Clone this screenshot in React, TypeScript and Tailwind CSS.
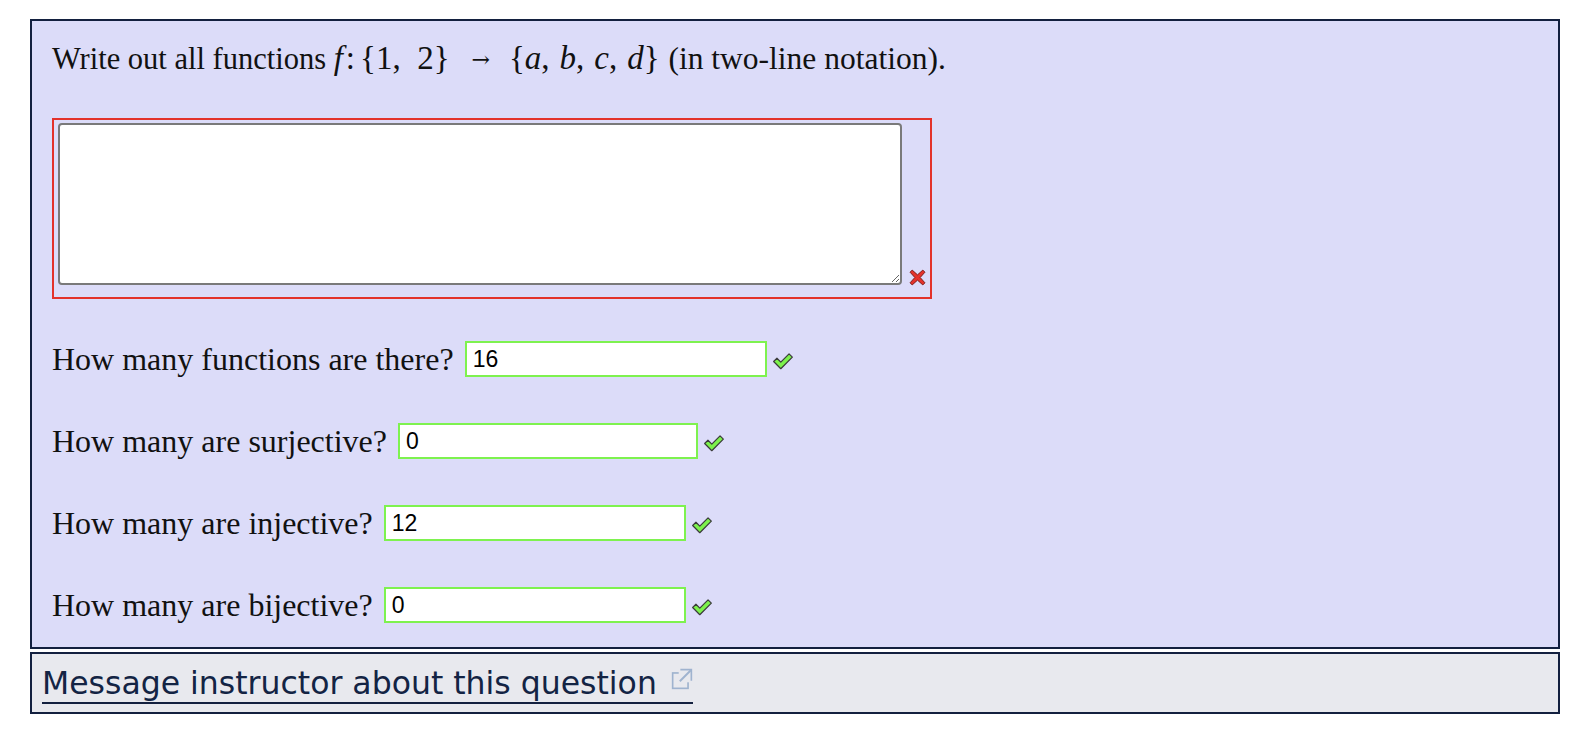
import React from "react";

function CheckIcon() {
  return (
    <svg width="22" height="18" viewBox="0 0 20 16" className="shrink-0">
      <path
        d="M1.5 8.5 L4.5 5.5 L8 9 L15.5 1.5 L18.5 4.5 L8 15 Z"
        fill="#7cf24c"
        stroke="#3b3b3b"
        strokeWidth={1.1}
        strokeLinejoin="round"
      />
    </svg>
  );
}

function CrossIcon() {
  return (
    <svg width="17" height="17" viewBox="0 0 16 16" className="shrink-0">
      <polygon
        points="3,1 8,5.5 13,1 15,3 10.5,8 15,13 13,15 8,10.5 3,15 1,13 5.5,8 1,3"
        fill="#e5322b"
        stroke="#7a1d18"
        strokeWidth={0.9}
        strokeLinejoin="round"
      />
    </svg>
  );
}

function ExternalIcon() {
  return (
    <svg width="22" height="22" viewBox="0 0 20 20" className="shrink-0 self-start mt-[4px]">
      <rect x="1.5" y="4.5" width="14" height="14" fill="none" stroke="#9fb3cf" strokeWidth={1.5} />
      <rect x="7" y="1" width="12" height="12" fill="#e8e9ee" />
      <path d="M8.5 1.5 H18.5 V11.5" fill="none" stroke="#9fb3cf" strokeWidth={1.5} />
      <path d="M18 2 L8 12" stroke="#9fb3cf" strokeWidth={1.8} />
    </svg>
  );
}

const rows = [
  { label: "How many functions are there?", value: "16", width: "w-[302px]" },
  { label: "How many are surjective?", value: "0", width: "w-[300px]" },
  { label: "How many are injective?", value: "12", width: "w-[302px]" },
  { label: "How many are bijective?", value: "0", width: "w-[302px]" },
];

export default function App() {
  const serif = "font-['Liberation_Serif',serif]";
  return (
    <div className="min-h-[750px] bg-white pt-[19px] pl-[30px]">
      <div className="w-[1530px] border-2 border-[#13203f] bg-[#dcdcf9] pl-[20px] pt-[19px] pb-[24px]">
        <p className={`${serif} text-[30.5px] leading-[37px] text-[#111] whitespace-nowrap`}>
          Write out all functions{" "}
          <span className="text-[33px]">
            <i className="mr-[3px]">f</i>:<span className="ml-[5px]">{"{"}1,&nbsp;&nbsp;2{"}"}</span>
            <span className="ml-[22px] mr-[19px] font-['DejaVu_Serif',serif] text-[22px] align-[2px]">→</span>
            <span>
              {"{"}
              <i>a</i>,<i className="ml-[10px]">b</i>,<i className="ml-[10px]">c</i>,
              <i className="ml-[10px]">d</i>
              {"}"}
            </span>
          </span>
          <span className="ml-[9px] text-[31.5px]">(in two-line notation).</span>
        </p>

        <div className="mt-[40px] flex w-[880px] items-end border-2 border-[#e3322b] pt-[3px] pl-[4px] pb-[12px]">
          <textarea
            className="h-[162px] w-[844px] resize-y rounded-[4px] border-2 border-[#7a7a7a] bg-white"
            defaultValue=""
          />
          <div className="ml-[7px] mb-[-1px]">
            <CrossIcon />
          </div>
        </div>

        <div className="mt-[42px] flex flex-col gap-[46px]">
          {rows.map((row) => (
            <div key={row.label} className="flex h-[36px] items-center">
              <span className={`${serif} text-[32px] leading-[37px] text-[#111] whitespace-nowrap`}>
                {row.label}
              </span>
              <input
                readOnly
                value={row.value}
                className={`ml-[11px] h-[36px] ${row.width} border-2 border-[#7ef24f] bg-white px-[6px] font-['Liberation_Sans',Arial,sans-serif] text-[23px] text-black outline-none`}
              />
              <div className="ml-[5px] mt-[3px]">
                <CheckIcon />
              </div>
            </div>
          ))}
        </div>
      </div>

      <div className="mt-[3px] flex h-[62px] w-[1530px] items-center border-2 border-[#13203f] bg-[#e8e9ee] pl-[10px] pt-[2px]">
        <a
          href="#"
          className="flex items-center gap-[14px] border-b-2 border-[#13203f] font-['DejaVu_Sans',Verdana,sans-serif] text-[31.5px] leading-[38px] text-[#132444] no-underline"
        >
          <span>Message instructor about this question</span>
          <ExternalIcon />
        </a>
      </div>
    </div>
  );
}
